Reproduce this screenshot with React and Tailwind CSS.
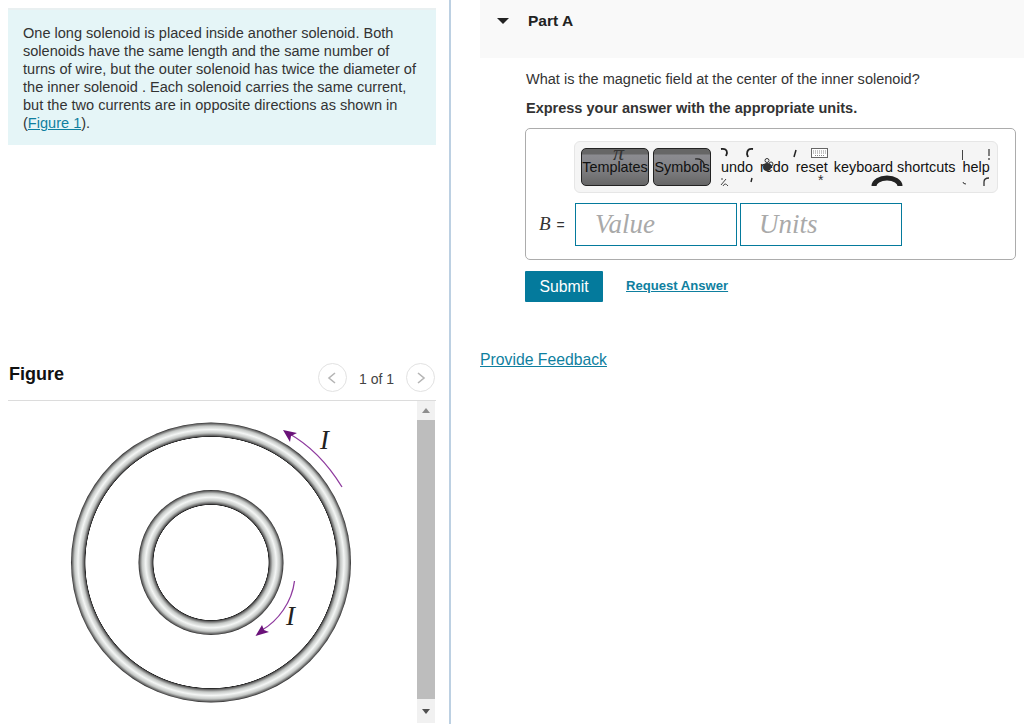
const sans = { fontFamily: '"Liberation Sans", Arial, sans-serif' };
const serif = { fontFamily: '"Liberation Serif", serif' };

const Rings = () => (
  <svg width="400" height="322" viewBox="0 0 400 322" className="block shrink-0">
    <defs>
      <radialGradient id="outerRing" gradientUnits="userSpaceOnUse" cx="203" cy="161.5" r="140">
        <stop offset="0.895" stopColor="#fff" />
        <stop offset="0.899" stopColor="#222" />
        <stop offset="0.907" stopColor="#666" />
        <stop offset="0.925" stopColor="#c4c7c5" />
        <stop offset="0.95" stopColor="#f4f6f5" />
        <stop offset="0.975" stopColor="#c4c7c5" />
        <stop offset="0.992" stopColor="#666" />
        <stop offset="1" stopColor="#222" />
      </radialGradient>
      <radialGradient id="innerRing" gradientUnits="userSpaceOnUse" cx="203" cy="161.5" r="72.5">
        <stop offset="0.79" stopColor="#fff" />
        <stop offset="0.798" stopColor="#222" />
        <stop offset="0.814" stopColor="#666" />
        <stop offset="0.85" stopColor="#c4c7c5" />
        <stop offset="0.9" stopColor="#f4f6f5" />
        <stop offset="0.95" stopColor="#c4c7c5" />
        <stop offset="0.984" stopColor="#666" />
        <stop offset="1" stopColor="#222" />
      </radialGradient>
    </defs>
    <circle cx="203" cy="161.5" r="140" fill="url(#outerRing)" />
    <circle cx="203" cy="161.5" r="72.5" fill="url(#innerRing)" />
    <path d="M334 86 C318 60 300 43 280 32" fill="none" stroke="#8e3a9e" strokeWidth="1.3" />
    <path d="M275 29 L289 32 L283 35 L282 41 Z" fill="#6a1279" />
    <path d="M286.500 180 C284 201 270 220 254 229" fill="none" stroke="#8e3a9e" strokeWidth="1.3" />
    <path d="M247.500 235 L254 224 L256 229 L261 231 Z" fill="#6a1279" />
    <text x="312" y="48" fontSize="27" fontStyle="italic" fill="#222" fontFamily="Liberation Serif, serif">I</text>
    <text x="278" y="224" fontSize="27" fontStyle="italic" fill="#222" fontFamily="Liberation Serif, serif">I</text>
  </svg>
);

const Pager = ({ flip }) => (
  <button className="flex w-[29px] h-[29px] items-center justify-center rounded-full border border-[#e2e2e2] bg-white">
    <svg width="10" height="14" viewBox="0 0 10 14">
      <path d={flip ? "M2 2 L8 7 L2 12" : "M8 2 L2 7 L8 12"} fill="none" stroke="#b5b5b5" strokeWidth="1.6" />
    </svg>
  </button>
);

// stray icon pieces that spill out of the toolbar buttons
const ToolbarScraps = () => (
  <svg width="424" height="52" viewBox="0 0 424 52" className="absolute -left-px -top-px pointer-events-none">
    <text x="39" y="19" fontSize="22" fontStyle="italic" fill="#333" fontFamily="Liberation Serif, serif">π</text>
    <path d="M121 18 q7 -1 9 5 l0 4" fill="none" stroke="#222" strokeWidth="1.2" />
    <path d="M147 8 q6 -1 6 4 l-1 3" fill="none" stroke="#222" strokeWidth="1.800" />
    <path d="M179 8 q-6 -1 -6 5 l1 3" fill="none" stroke="#222" strokeWidth="1.800" />
    <path d="M147 44 l5 -6 M147 38 l2 0 M149 45 q2 -4 5 0" fill="none" stroke="#444" strokeWidth="1" />
    <path d="M177 41 l1 -4" stroke="#222" strokeWidth="1.400" />
    <circle cx="193" cy="26" r="4" fill="#333" />
    <circle cx="193" cy="19.500" r="2" fill="none" stroke="#333" />
    <circle cx="197" cy="23" r="2" fill="none" stroke="#333" />
    <path d="M220 16 l2 -7" stroke="#222" strokeWidth="1.500" />
    <rect x="237.500" y="7.500" width="16" height="9" fill="#fff" stroke="#666" />
    <path d="M239 10 h13 M239 12 h13 M241 14.500 h9" stroke="#888" strokeDasharray="1 1" />
    <path d="M388.500 9 v10" stroke="#444" />
    <path d="M415 8 v7 M415 17 v2" stroke="#333" strokeWidth="1.200" />
    <path d="M389 41 q0 2 3 2" fill="none" stroke="#333" />
    <path d="M410 45 v-4 q0 -4 5 -4" fill="none" stroke="#333" strokeWidth="1.300" />
    <path d="M300 45 A13 8 0 0 1 326 45" fill="none" stroke="#222" strokeWidth="5" />
    <text x="244" y="44" fontSize="14" fill="#333" fontFamily="Liberation Sans, sans-serif">*</text>
  </svg>
);

const GrayButton = ({ children, className }) => (
  <button className={`h-[38px] rounded-[5px] border border-[#222] text-[14.400px] text-[#111] leading-none whitespace-nowrap bg-[linear-gradient(#666_0,#666_5px,#8b8b90_6px,#858589_45%,#666_100%)] ${className}`}>
    {children}
  </button>
);

export default function App() {
  return (
    <div className="flex h-[724px] w-[1024px] overflow-hidden bg-white text-[#333]" style={sans}>
      <div className="w-[451px] shrink-0 border-r-2 border-[#bcd0e2] pl-2 pr-[13px] pt-2">
        <div className="h-[137px] border-t-2 border-[#e9f0f1] bg-[#e5f5f7] pl-[15px] pt-[14px] text-[14.560px] leading-[18px] whitespace-nowrap">
          One long solenoid is placed inside another solenoid. Both<br />
          solenoids have the same length and the same number of<br />
          turns of wire, but the outer solenoid has twice the diameter of<br />
          the inner solenoid . Each solenoid carries the same current,<br />
          but the two currents are in opposite directions as shown in<br />
          (<a href="#" className="text-[#0f7f9f] underline">Figure 1</a>).
        </div>

        <div className="mt-[217px] flex h-[39px] items-start justify-between border-b border-[#dcdcdc]">
          <h2 className="pl-px pt-[2px] text-[18px] font-bold leading-5 text-[#111]">Figure</h2>
          <div className="mt-px mr-px flex items-center gap-3 text-[14px] text-[#444]">
            <Pager />
            <span className="pt-1">1 of 1</span>
            <Pager flip />
          </div>
        </div>
        <div className="flex">
          <Rings />
          <div className="ml-[9px] flex h-[322px] w-[18px] flex-col bg-[#f1f1f1]">
            <div className="flex h-[19px] items-center justify-center">
              <div className="h-0 w-0 border-x-[4.500px] border-b-[5px] border-x-transparent border-b-[#8e8e8e]" />
            </div>
            <div className="h-[279px] bg-[#bdbdbd]" />
            <div className="flex h-6 items-center justify-center">
              <div className="h-0 w-0 border-x-[4.500px] border-t-[5px] border-x-transparent border-t-[#505050]" />
            </div>
          </div>
        </div>
      </div>

      <div className="flex-1 pl-[29px]">
        <div className="flex h-[58px] items-start bg-[#f9f9f9] pt-3">
          <div className="ml-[17px] mt-[6px] h-0 w-0 border-x-[6px] border-t-[6px] border-x-transparent border-t-[#222]" />
          <h3 className="ml-[19px] text-[15.500px] font-bold leading-[18px] text-[#222]">Part A</h3>
        </div>

        <div className="pl-[45px] pr-2">
          <p className="ml-px mt-[13px] text-[14.530px] leading-4 whitespace-nowrap">What is the magnetic field at the center of the inner solenoid?</p>
          <p className="ml-px mt-[13px] text-[14.500px] font-bold leading-4 whitespace-nowrap">Express your answer with the appropriate units.</p>

          <div className="mt-3 h-[132px] rounded-[5px] border border-[#acacac] pl-[48px] pt-3">
            <div className="relative flex h-[52px] w-[424px] items-center rounded-[6px] border border-[#e6e6e6] bg-[#f5f5f5] pl-[6px]">
              <GrayButton className="w-[68px]">Templates</GrayButton>
              <GrayButton className="ml-1 w-[58px]">Symbols</GrayButton>
              <div className="ml-[10px] flex whitespace-nowrap text-[14.400px] leading-none text-[#111]">
                <span>undo</span>
                <span className="ml-[7px]">redo</span>
                <span className="ml-[7px]">reset</span>
                <span className="ml-[6px]">keyboard shortcuts</span>
                <span className="ml-[7px]">help</span>
              </div>
              <ToolbarScraps />
            </div>
            <div className="-ml-[35px] mt-[10px] flex items-center">
              <span className="w-[36px] whitespace-nowrap text-[14px]">
                <i className="text-[19px]" style={serif}>B</i><span className="ml-[6px]">=</span>
              </span>
              <input placeholder="Value" className="h-[43px] w-[162px] border border-[#047a9c] pl-[19px] text-[27px] italic outline-none placeholder:text-[#a9a9a9]" style={serif} />
              <input placeholder="Units" className="ml-[3px] h-[43px] w-[162px] border border-[#047a9c] pl-[18px] text-[27px] italic outline-none placeholder:text-[#a9a9a9]" style={serif} />
            </div>
          </div>

          <div className="mt-[11px] flex items-center">
            <button className="h-[31px] w-[78px] rounded-[1px] bg-[#047a9c] text-[15.800px] text-white">Submit</button>
            <a href="#" className="ml-[23px] -mt-px text-[13.100px] font-bold text-[#0f7f9f] underline">Request Answer</a>
          </div>
        </div>

        <a href="#" className="mt-[49px] block text-[15.750px] leading-[18px] text-[#0f7f9f] underline">Provide Feedback</a>
      </div>
    </div>
  );
}
